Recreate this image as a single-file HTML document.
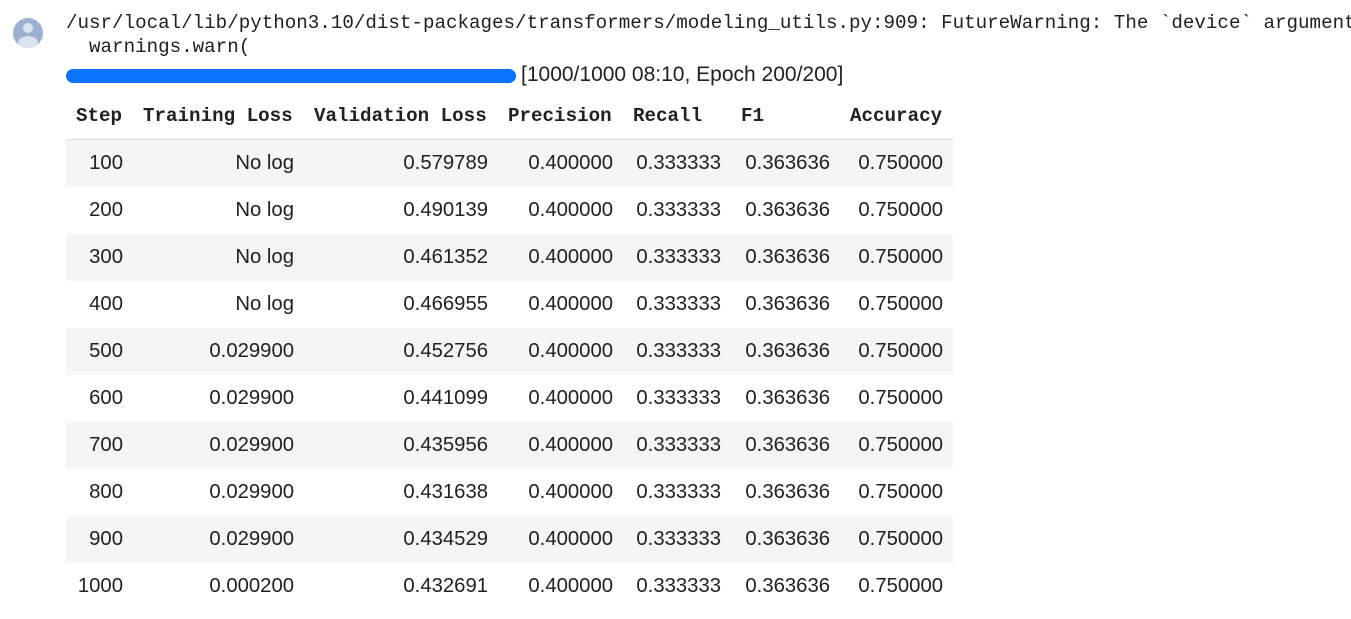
<!DOCTYPE html>
<html><head><style>
body{margin:0;background:#fff;width:1351px;height:619px;overflow:hidden;position:relative;font-family:"Liberation Sans",Arial,sans-serif;color:#212121}
.av{position:absolute;left:13px;top:18px;width:30px;height:30px;border-radius:50%;background:#9db0d0;overflow:hidden}
.av:before{content:"";position:absolute;left:10px;top:5px;width:10px;height:10px;border-radius:50%;background:#dbe3f0}
.av:after{content:"";position:absolute;left:5px;top:18px;width:20px;height:14px;border-radius:50%;background:#dbe3f0}
pre{position:absolute;left:66px;top:11px;width:1285px;overflow:hidden;margin:0;font-family:"Liberation Mono",monospace;font-size:19.2px;line-height:24px;color:#212121;white-space:pre}
.bar{position:absolute;left:66px;top:69px;width:450px;height:14px;border-radius:7px;background:#0a74ff}
.pt{position:absolute;left:521px;top:63px;font-size:21px;line-height:24px}
table{position:absolute;left:66px;top:93px;border-collapse:collapse;font-size:20.3px}
th{font-family:"Liberation Mono",monospace;font-size:19.2px;font-weight:bold;text-align:left;height:46px;padding:0 10px;border-bottom:1px solid #ddd;white-space:nowrap}
td{text-align:right;height:47px;padding:0 10px;white-space:nowrap}
tbody tr:nth-child(odd){background:#f5f5f5}
</style></head><body>
<div class="av"></div>
<pre>/usr/local/lib/python3.10/dist-packages/transformers/modeling_utils.py:909: FutureWarning: The `device` argument
  warnings.warn(</pre>
<div class="bar"></div>
<div class="pt">[1000/1000 08:10, Epoch 200/200]</div>
<table>
<colgroup><col style="width:67px"><col style="width:171px"><col style="width:194px"><col style="width:125px"><col style="width:108px"><col style="width:109px"><col style="width:113px"></colgroup>
<thead><tr><th>Step</th><th>Training Loss</th><th>Validation Loss</th><th>Precision</th><th>Recall</th><th>F1</th><th>Accuracy</th></tr></thead>
<tbody>
<tr><td>100</td><td>No log</td><td>0.579789</td><td>0.400000</td><td>0.333333</td><td>0.363636</td><td>0.750000</td></tr>
<tr><td>200</td><td>No log</td><td>0.490139</td><td>0.400000</td><td>0.333333</td><td>0.363636</td><td>0.750000</td></tr>
<tr><td>300</td><td>No log</td><td>0.461352</td><td>0.400000</td><td>0.333333</td><td>0.363636</td><td>0.750000</td></tr>
<tr><td>400</td><td>No log</td><td>0.466955</td><td>0.400000</td><td>0.333333</td><td>0.363636</td><td>0.750000</td></tr>
<tr><td>500</td><td>0.029900</td><td>0.452756</td><td>0.400000</td><td>0.333333</td><td>0.363636</td><td>0.750000</td></tr>
<tr><td>600</td><td>0.029900</td><td>0.441099</td><td>0.400000</td><td>0.333333</td><td>0.363636</td><td>0.750000</td></tr>
<tr><td>700</td><td>0.029900</td><td>0.435956</td><td>0.400000</td><td>0.333333</td><td>0.363636</td><td>0.750000</td></tr>
<tr><td>800</td><td>0.029900</td><td>0.431638</td><td>0.400000</td><td>0.333333</td><td>0.363636</td><td>0.750000</td></tr>
<tr><td>900</td><td>0.029900</td><td>0.434529</td><td>0.400000</td><td>0.333333</td><td>0.363636</td><td>0.750000</td></tr>
<tr><td>1000</td><td>0.000200</td><td>0.432691</td><td>0.400000</td><td>0.333333</td><td>0.363636</td><td>0.750000</td></tr>
</tbody></table>
</body></html>
